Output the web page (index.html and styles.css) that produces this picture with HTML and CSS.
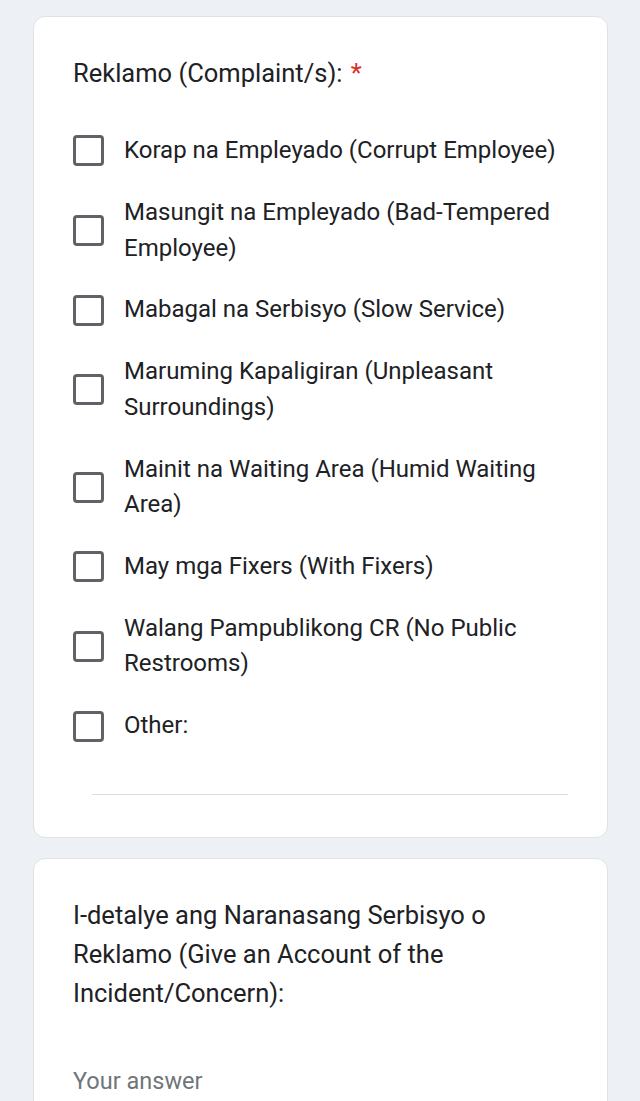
FILE: index.html
```html
<!DOCTYPE html>
<html lang="en">
<head>
  <meta charset="UTF-8" />
  <meta name="viewport" content="width=device-width, initial-scale=1.0" />
  <title>Reklamo</title>
  <link rel="stylesheet" href="styles.css">
</head>
<body>
  <div class="card">
    <div class="question">Reklamo (Complaint/s): <span class="required">*</span></div>
    <div class="options">
      <label class="option"><span class="box"></span><span class="text">Korap na Empleyado (Corrupt Employee)</span></label>
      <label class="option"><span class="box"></span><span class="text">Masungit na Empleyado (Bad-Tempered Employee)</span></label>
      <label class="option"><span class="box"></span><span class="text">Mabagal na Serbisyo (Slow Service)</span></label>
      <label class="option"><span class="box"></span><span class="text">Maruming Kapaligiran (Unpleasant Surroundings)</span></label>
      <label class="option"><span class="box"></span><span class="text">Mainit na Waiting Area (Humid Waiting Area)</span></label>
      <label class="option"><span class="box"></span><span class="text">May mga Fixers (With Fixers)</span></label>
      <label class="option"><span class="box"></span><span class="text">Walang Pampublikong CR (No Public Restrooms)</span></label>
      <label class="option"><span class="box"></span><span class="text">Other:</span></label>
    </div>
    <div class="other-line"></div>
  </div>

  <div class="card">
    <div class="question">I-detalye ang Naranasang Serbisyo o Reklamo (Give an Account of the Incident/Concern):</div>
    <div class="answer">Your answer</div>
  </div>
</body>
</html>
```

FILE: styles.css
```css
body {
  font-family: Roboto, 'Noto Sans', sans-serif;
  background: #edf0f4;
  color: #202124;
  margin: 0;
  padding: 16px 32px 40px 33px;
}

.card {
  background: white;
  border: 1px solid #dfe1e5;
  border-radius: 12px;
  padding: 37px 39px 42px 39px;
  margin-bottom: 20px;
}

.question {
  font-size: 25.5px;
  line-height: 39px;
}

.required {
  color: #d93025;
  margin-left: 2px;
}

.options {
  margin-top: 27px;
}

.option {
  display: flex;
  align-items: center;
  padding: 13.2px 0;
  font-size: 24px;
  line-height: 35.5px;
}

.box {
  flex: none;
  width: 25px;
  height: 25px;
  border: 3px solid #5f6368;
  border-radius: 4px;
  margin-right: 20px;
}

.other-line {
  border-top: 1px solid #dadce0;
  margin: 37px 0 0 19px;
}

.answer {
  margin-top: 53px;
  font-size: 23.5px;
  line-height: 30px;
  color: #70757a;
}
```
